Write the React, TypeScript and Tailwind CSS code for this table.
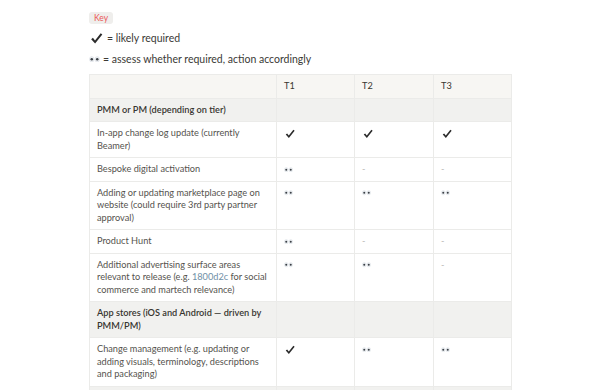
import React from 'react';

const font = { fontFamily: 'Lato, "Liberation Sans", sans-serif' };

function Check({ size = 14 }: { size?: number }) {
  return (
    <svg width={size} height={size} viewBox="0 0 16 16" className="inline-block">
      <path d="M2.3 8.7 L4.2 7.2 L6.4 10 L12.5 2.4 L14.2 3.8 L6.5 13.4 Z" fill="#2b2b2b" />
    </svg>
  );
}

function Eyes({ w = 11 }: { w?: number }) {
  return (
    <svg width={w} height={w * 0.6} viewBox="0 0 20 12" className="inline-block">
      <ellipse cx="5" cy="6" rx="4.2" ry="5" fill="#eef1f4" stroke="#d6dbe0" strokeWidth="0.8" />
      <ellipse cx="15" cy="6" rx="4.2" ry="5" fill="#eef1f4" stroke="#d6dbe0" strokeWidth="0.8" />
      <circle cx="5" cy="6" r="2.3" fill="#3a3f45" />
      <circle cx="15" cy="6" r="2.3" fill="#3a3f45" />
    </svg>
  );
}

function Dash() {
  return <span className="text-[#b9b8b5]">-</span>;
}

type Mark = 'check' | 'eyes' | 'dash';

function MarkCell({ m }: { m: Mark }) {
  if (m === 'check') return <Check size={12} />;
  if (m === 'eyes') return <Eyes w={9} />;
  return <Dash />;
}

type Row =
  | { kind: 'section'; label: string }
  | { kind: 'item'; label: React.ReactNode; marks: [Mark, Mark, Mark] };

const ROWS: Row[] = [
  { kind: 'section', label: 'PMM or PM (depending on tier)' },
  { kind: 'item', label: 'In-app change log update (currently Beamer)', marks: ['check', 'check', 'check'] },
  { kind: 'item', label: 'Bespoke digital activation', marks: ['eyes', 'dash', 'dash'] },
  {
    kind: 'item',
    label: 'Adding or updating marketplace page on website (could require 3rd party partner approval)',
    marks: ['eyes', 'eyes', 'eyes'],
  },
  { kind: 'item', label: 'Product Hunt', marks: ['eyes', 'dash', 'dash'] },
  {
    kind: 'item',
    label: (
      <>
        Additional advertising surface areas relevant to release (e.g. <span className="text-[#6f8fa6]">1800d2c</span> for social
        commerce and martech relevance)
      </>
    ),
    marks: ['eyes', 'eyes', 'dash'],
  },
  { kind: 'section', label: 'App stores (iOS and Android — driven by PMM/PM)' },
  {
    kind: 'item',
    label: 'Change management (e.g. updating or adding visuals, terminology, descriptions and packaging)',
    marks: ['check', 'eyes', 'eyes'],
  },
  // next section continues below the fold
  { kind: 'section', label: '' },
];

const cell = 'border border-[#ebebe9] px-[7px] py-[5px] align-top leading-[12.5px]';

export default function App() {
  return (
    <div className="w-[600px] h-[390px] overflow-hidden bg-white" style={font}>
      <div className="pl-[89px] pt-[12px]">
        <div className="w-fit rounded-[3px] bg-[#efeeec] px-[5px] text-[8.5px] leading-[12px] text-[#eb5757]">
          Key
        </div>
        <div className="mt-[6px] flex items-center gap-[3px] text-[10.5px] text-[#3b3a36] leading-[16px]">
          <Check size={15} />
          <span>= likely required</span>
        </div>
        <div className="mt-[5px] flex items-center gap-[3px] text-[10.5px] text-[#3b3a36] leading-[16px]">
          <Eyes w={11} />
          <span>= assess whether required, action accordingly</span>
        </div>
      </div>

      <table className="ml-[89px] mt-[7px] w-[422px] table-fixed border-collapse text-[9.2px] text-[#55534e]">
        <colgroup>
          <col className="w-[187px]" />
          <col className="w-[78px]" />
          <col className="w-[79px]" />
          <col className="w-[78px]" />
        </colgroup>
        <thead>
          <tr className="bg-[#f7f6f3] text-[#37352f]">
            <th className={`${cell} font-normal text-left`}></th>
            <th className={`${cell} font-normal text-left`}>T1</th>
            <th className={`${cell} font-normal text-left`}>T2</th>
            <th className={`${cell} font-normal text-left`}>T3</th>
          </tr>
        </thead>
        <tbody>
          {ROWS.map((r, i) =>
            r.kind === 'section' ? (
              <tr key={i} className="bg-[#f1f1ef]">
                <td className={`${cell} font-semibold text-[#37352f]`}>{r.label || '\u00a0'}</td>
                <td className={cell}></td>
                <td className={cell}></td>
                <td className={cell}></td>
              </tr>
            ) : (
              <tr key={i}>
                <td className={cell}>{r.label}</td>
                {r.marks.map((m, j) => (
                  <td key={j} className={cell}>
                    <MarkCell m={m} />
                  </td>
                ))}
              </tr>
            ),
          )}
        </tbody>
      </table>
    </div>
  );
}
